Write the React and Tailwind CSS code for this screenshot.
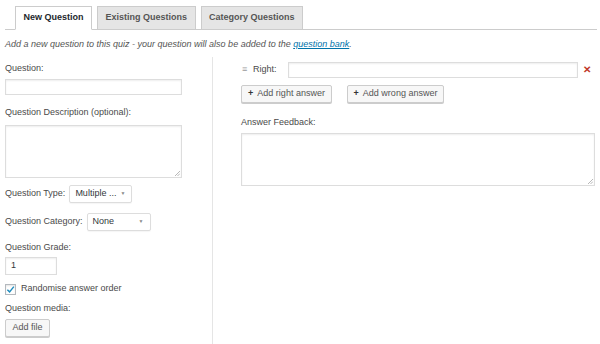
import { useState } from "react";

function Select({ value, width }) {
  return (
    <div
      className={`flex items-center justify-between h-[18px] ${width} border border-[#ddd] rounded-[2px] bg-white pl-[5px] pr-[6px] shadow-[0_1px_1px_rgba(0,0,0,0.04)]`}
    >
      <span className="text-[9px] text-[#32373c]">{value}</span>
      <span className="text-[5px] text-[#888]">▼</span>
    </div>
  );
}

function Button({ children, className = "" }) {
  return (
    <button
      className={`h-[18px] border border-[#ccc] bg-[#f7f7f7] rounded-[2px] shadow-[0_1px_0_#ccc] text-[9px] text-[#555] flex items-center ${className}`}
    >
      {children}
    </button>
  );
}

function Resize() {
  return (
    <svg className="absolute right-[1px] bottom-[1px]" width="6" height="6" viewBox="0 0 6 6">
      <path d="M1 6L6 1M3.5 6L6 3.5" stroke="#999" strokeWidth="0.7" />
    </svg>
  );
}

const field = "border border-[#ddd] bg-white shadow-[inset_0_1px_2px_rgba(0,0,0,0.07)]";

export default function App() {
  const [checked, setChecked] = useState(true);

  return (
    <div className="w-[600px] h-[344px] overflow-hidden bg-white text-[#4a4a4a] font-['Liberation_Sans',Arial,sans-serif] px-[5px]">
      {/* Tabs */}
      <div className="flex items-end gap-[5px] pl-[10px] pt-[6px] border-b border-[#ccc] mr-[-2px]">
        <div className="h-[24px] px-[7.5px] flex items-center bg-white border border-[#ccc] border-b-white mb-[-1px] text-[9px] font-bold text-[#23282d]">
          New Question
        </div>
        <div className="h-[23px] px-[7.5px] flex items-center bg-[#e5e5e5] border border-[#ccc] border-b-0 text-[9px] font-bold text-[#555]">
          Existing Questions
        </div>
        <div className="h-[23px] px-[7.5px] flex items-center bg-[#e5e5e5] border border-[#ccc] border-b-0 text-[9px] font-bold text-[#555]">
          Category Questions
        </div>
      </div>

      <p className="mt-[8px] text-[9px] italic text-[#555] leading-[12px]">
        Add a new question to this quiz - your question will also be added to the{" "}
        <a className="text-[#0073aa] underline">question bank</a>.
      </p>

      <div className="flex mt-[7px]">
        {/* Left column */}
        <div className="w-[208px] border-r border-[#e5e5e5] pt-[5px] h-[300px]">
          <div className="text-[9px] leading-[12px]">Question:</div>
          <div className={`mt-[5px] w-[177px] h-[16px] ${field}`} />

          <div className="mt-[11px] text-[9px] leading-[12px]">Question Description (optional):</div>
          <div className={`relative mt-[7px] w-[177px] h-[53px] ${field}`}>
            <Resize />
          </div>

          <div className="mt-[7px] flex items-center gap-[4px]">
            <span className="text-[9px]">Question Type:</span>
            <Select value="Multiple ..." width="w-[63px]" />
          </div>

          <div className="mt-[10px] flex items-center gap-[4px]">
            <span className="text-[9px]">Question Category:</span>
            <Select value="None" width="w-[64px]" />
          </div>

          <div className="mt-[10px] text-[9px] leading-[12px]">Question Grade:</div>
          <div className={`mt-[4px] w-[52px] h-[18px] flex items-center px-[5px] text-[9px] text-[#32373c] ${field}`}>
            1
          </div>

          <label className="mt-[8px] h-[12px] flex items-center gap-[5px]" onClick={() => setChecked(!checked)}>
            <span className="w-[11px] h-[11px] border border-[#b4b9be] bg-white flex items-center justify-center shadow-[inset_0_1px_2px_rgba(0,0,0,0.1)]">
              {checked && (
                <svg width="9" height="9" viewBox="0 0 10 10">
                  <path d="M1.5 5.2L4 7.6L8.7 1.8" stroke="#1e8cbe" strokeWidth="1.6" fill="none" />
                </svg>
              )}
            </span>
            <span className="text-[9px]">Randomise answer order</span>
          </label>

          <div className="mt-[7px] text-[9px] leading-[12px]">Question media:</div>
          <Button className="mt-[5px] w-[45px] justify-center">Add file</Button>
        </div>

        {/* Right column */}
        <div className="flex-1 pl-[28px] pt-[5px]">
          <div className="flex items-center h-[16px]">
            <span className="text-[9px] text-[#999] w-[11px] ml-[1px]">≡</span>
            <span className="text-[9px] w-[35px]">Right:</span>
            <div className={`w-[290px] h-[16px] ${field}`} />
            <span className="ml-[5px] text-[10px] font-bold text-[#c0392b] leading-none">✕</span>
          </div>
          <div className="mt-[7px] flex gap-[15px]">
            <Button className="w-[91px] justify-center gap-[4px]">
              <span className="font-bold text-[#333]">+</span> Add right answer
            </Button>
            <Button className="w-[97px] justify-center gap-[4px]">
              <span className="font-bold text-[#333]">+</span> Add wrong answer
            </Button>
          </div>
          <div className="mt-[13px] text-[9px] leading-[12px]">Answer Feedback:</div>
          <div className={`relative mt-[5px] w-[354px] h-[53px] ${field}`}>
            <Resize />
          </div>
        </div>
      </div>
    </div>
  );
}
